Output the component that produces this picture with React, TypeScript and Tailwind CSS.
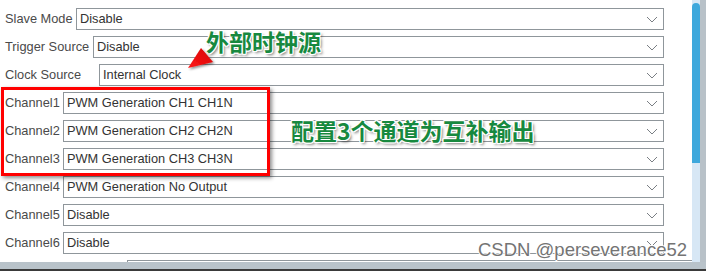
import React from 'react';

type Row = {
    label: string;
    value: string;
    labelWidth: string;
};

const rows: Row[] = [
    { label: 'Slave Mode', value: 'Disable', labelWidth: 'w-[76px]' },
    { label: 'Trigger Source', value: 'Disable', labelWidth: 'w-[93px]' },
    { label: 'Clock Source', value: 'Internal Clock', labelWidth: 'w-[99px]' },
    { label: 'Channel1', value: 'PWM Generation CH1 CH1N', labelWidth: 'w-[63px]' },
    { label: 'Channel2', value: 'PWM Generation CH2 CH2N', labelWidth: 'w-[63px]' },
    { label: 'Channel3', value: 'PWM Generation CH3 CH3N', labelWidth: 'w-[63px]' },
    { label: 'Channel4', value: 'PWM Generation No Output', labelWidth: 'w-[63px]' },
    { label: 'Channel5', value: 'Disable', labelWidth: 'w-[63px]' },
    { label: 'Channel6', value: 'Disable', labelWidth: 'w-[63px]' },
];

const Chevron = () => (
    <svg width="12" height="7" viewBox="0 0 12 7" className="mr-[5px] shrink-0">
        <polyline points="1,1 6,6 11,1" fill="none" stroke="#7a7f84" strokeWidth="1" />
    </svg>
);

const outline =
    '[text-shadow:1px_0_0_#fff,-1px_0_0_#fff,0_1px_0_#fff,0_-1px_0_#fff,1px_1px_0_#fff,-1px_-1px_0_#fff,1px_-1px_0_#fff,-1px_1px_0_#fff,2px_2px_3px_rgba(0,0,0,0.55)]';

const App = () => {
    return (
        <div className="relative flex h-[271px] w-[706px] flex-col overflow-hidden bg-white font-['Liberation_Sans',Arial,sans-serif]">
            <div className="flex min-h-0 flex-1">
                <main className="flex w-[692px] flex-col gap-[6px] overflow-hidden pt-[8px]">
                    {rows.map((row) => (
                        <div key={row.label} className="flex h-[22px] w-[664px] shrink-0 items-center">
                            <span className={`${row.labelWidth} shrink-0 pl-[5px] text-[12.8px] whitespace-nowrap text-[#4a4a4a]`}>
                                {row.label}
                            </span>
                            <div className="flex h-full flex-1 items-center justify-between border border-[#8f969b] bg-white">
                                <span className="pl-[3px] text-[12.8px] whitespace-nowrap text-[#333]">{row.value}</span>
                                <Chevron />
                            </div>
                        </div>
                    ))}
                    <div className="ml-[127px] h-[10px] shrink-0 border-t border-l border-[#8f969b]" />
                </main>
                <div className="flex w-[8px] flex-col bg-[#d7e7f5] pt-[3px]">
                    <div className="h-[160px] rounded-t-[4px] bg-[#3ea8dc]" />
                </div>
                <div className="w-[6px] bg-[#b8c1c8]" />
            </div>
            <div className="h-[7px] shrink-0 bg-[#b9c3ca]" />
            <div className="h-[2px] shrink-0 bg-[#3a3a3a]" />

            {/* annotations */}
            <div className="absolute top-[87px] left-[1px] h-[89px] w-[269px] border-[3px] border-[#ff0000] shadow-[2px_2px_4px_rgba(0,0,0,0.45)]" />
            <div
                className={`absolute top-[27px] left-[206px] text-[23px] leading-[28px] font-bold text-[#17893f] font-['Noto_Sans_CJK_SC',sans-serif] ${outline}`}
            >
                外部时钟源
            </div>
            <svg width="34" height="28" viewBox="0 0 34 28" className="absolute top-[45px] left-[185px]">
                <defs>
                    <linearGradient id="arrowFill" x1="0" y1="1" x2="1" y2="0">
                        <stop offset="0" stopColor="#ff1a1a" />
                        <stop offset="1" stopColor="#d40000" />
                    </linearGradient>
                    <filter id="arrowShadow" x="-20%" y="-20%" width="150%" height="150%">
                        <feDropShadow dx="1.5" dy="1.5" stdDeviation="1.2" floodColor="#000" floodOpacity="0.45" />
                    </filter>
                </defs>
                <polygon points="3,23 16,3 28,17" fill="url(#arrowFill)" filter="url(#arrowShadow)" />
            </svg>
            <div
                className={`absolute top-[116px] left-[291px] text-[23px] leading-[28px] font-bold text-[#17893f] font-['Noto_Sans_CJK_SC',sans-serif] ${outline}`}
            >
                配置3个通道为互补输出
            </div>
            <div className="absolute top-[239px] left-[478px] text-[18.5px] leading-[22px] whitespace-nowrap text-[#747474] [text-shadow:1px_0_0_#fff,-1px_0_0_#fff,0_1px_0_#fff,0_-1px_0_#fff]">
                CSDN @perseverance52
            </div>
        </div>
    );
};

export default App;
